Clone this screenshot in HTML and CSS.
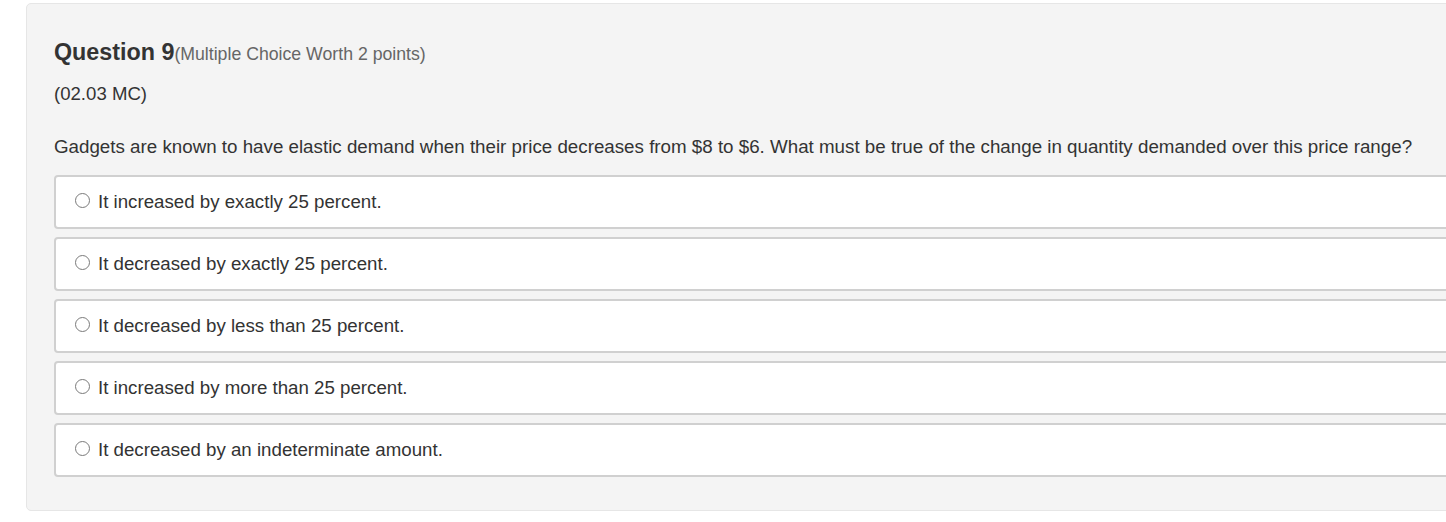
FILE: index.html
```html
<!DOCTYPE html>
<html>
<head>
<meta charset="utf-8">
<link rel="stylesheet" href="styles.css">
</head>
<body>
<div class="panel">
  <div class="title"><span class="qnum">Question 9</span><span class="qmeta">(Multiple Choice Worth 2 points)</span></div>
  <div class="code">(02.03 MC)</div>
  <div class="prompt">Gadgets are known to have elastic demand when their price decreases from $8 to $6. What must be true of the change in quantity demanded over this price range?</div>
  <div class="options">
    <label class="option"><span class="radio"></span><span class="otext">It increased by exactly 25 percent.</span></label>
    <label class="option"><span class="radio"></span><span class="otext">It decreased by exactly 25 percent.</span></label>
    <label class="option"><span class="radio"></span><span class="otext">It decreased by less than 25 percent.</span></label>
    <label class="option"><span class="radio"></span><span class="otext">It increased by more than 25 percent.</span></label>
    <label class="option"><span class="radio"></span><span class="otext">It decreased by an indeterminate amount.</span></label>
  </div>
</div>
</body>
</html>
```
FILE: styles.css
```css
html, body {
  margin: 0;
  padding: 0;
  overflow: hidden;
  background: #ffffff;
}
body {
  font-family: "Liberation Sans", Arial, sans-serif;
  color: #333333;
  width: 1446px;
  height: 522px;
}
.panel {
  margin: 3px 0 0 26px;
  width: 1500px;
  box-sizing: border-box;
  border: 1px solid #e6e6e6;
  border-radius: 5px;
  background: #f4f4f4;
  padding: 34px 0 33px 27px;
}
.title {
  line-height: 28px;
  height: 28px;
}
.qnum {
  font-size: 23.3px;
  font-weight: bold;
  color: #333333;
}
.qmeta {
  font-size: 17.7px;
  color: #666666;
}
.code {
  margin-top: 15px;
  font-size: 18.6px;
  line-height: 26px;
}
.prompt {
  margin-top: 27px;
  font-size: 18.75px;
  line-height: 26px;
  white-space: nowrap;
}
.options {
  margin-top: 15px;
  display: flex;
  flex-direction: column;
  gap: 8px;
}
.option {
  display: flex;
  align-items: center;
  height: 54px;
  box-sizing: border-box;
  border: 2px solid #d0d0d0;
  border-radius: 4px;
  background: #ffffff;
  padding-left: 19px;
  font-size: 18.7px;
}
.radio {
  width: 15px;
  height: 15px;
  box-sizing: border-box;
  border: 1px solid #7a7a7a;
  border-radius: 50%;
  background: #ffffff;
  margin-right: 8px;
  margin-top: -3px;
  flex: none;
}
.otext {
  line-height: 26px;
}
```
